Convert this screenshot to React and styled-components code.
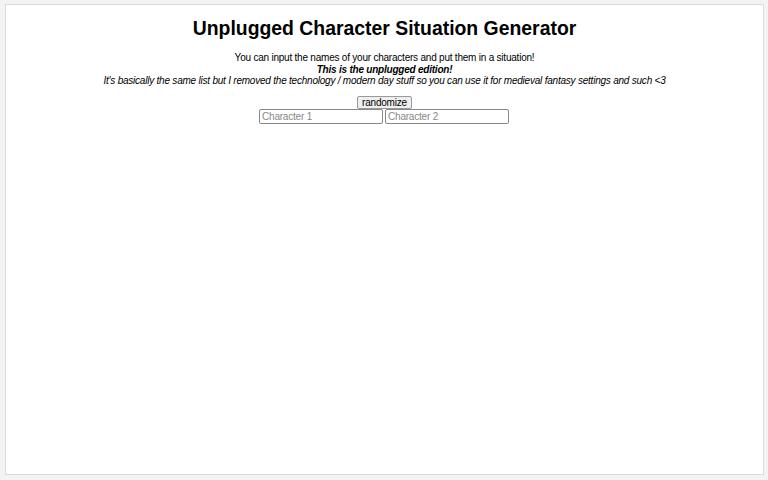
import React, { useState } from "react";
import styled, { createGlobalStyle } from "styled-components";

const Global = createGlobalStyle`
  html, body { margin: 0; padding: 0; background: #f3f3f3; }
  body { font-family: "Liberation Sans", Arial, sans-serif; }
`;

const Page = styled.div`
  margin: 4px 4px 0 5px;
  height: 469px;
  background: #fff;
  border: 1px solid #dcdcdc;
  text-align: center;
  color: #000;
`;

const Title = styled.h1`
  margin: 0;
  padding-top: 11px;
  font-size: 19.4px;
  line-height: 24px;
  font-weight: bold;
`;

const Intro = styled.div`
  margin-top: 12px;
  font-size: 10px;
  line-height: 11.5px;
  letter-spacing: -0.22px;
`;

const Line = styled.div`
  font-style: ${(p) => (p.$italic ? "italic" : "normal")};
  font-weight: ${(p) => (p.$bold ? "bold" : "normal")};
`;

const Controls = styled.div`
  margin-top: 9px;
  display: flex;
  flex-direction: column;
  align-items: center;
`;

const Button = styled.button`
  font-family: "Liberation Sans", Arial, sans-serif;
  font-size: 10px;
  line-height: 11px;
  letter-spacing: -0.2px;
  padding: 0 4px;
  background: #efefef;
  border: 1px solid #999;
  border-radius: 2px;
  color: #000;
`;

const Inputs = styled.div`
  display: flex;
  gap: 2px;
  margin-right: 1px;
`;

const Field = styled.input`
  width: 124px;
  height: 15px;
  box-sizing: border-box;
  font-family: "Liberation Sans", Arial, sans-serif;
  font-size: 10px;
  letter-spacing: -0.2px;
  padding: 0 2px;
  border: 1px solid #888;
  border-radius: 2px;
  &::placeholder { color: #888; }
`;

export default function App() {
  const [a, setA] = useState("");
  const [b, setB] = useState("");
  return (
    <>
      <Global />
      <Page>
        <Title>Unplugged Character Situation Generator</Title>
        <Intro>
          <Line>You can input the names of your characters and put them in a situation!</Line>
          <Line $bold $italic>This is the unplugged edition!</Line>
          <Line $italic>
            It's basically the same list but I removed the technology / modern day stuff so you can use it for medieval fantasy settings and such &lt;3
          </Line>
        </Intro>
        <Controls>
          <Button type="button">randomize</Button>
          <Inputs>
            <Field placeholder="Character 1" value={a} onChange={(e) => setA(e.target.value)} />
            <Field placeholder="Character 2" value={b} onChange={(e) => setB(e.target.value)} />
          </Inputs>
        </Controls>
      </Page>
    </>
  );
}
